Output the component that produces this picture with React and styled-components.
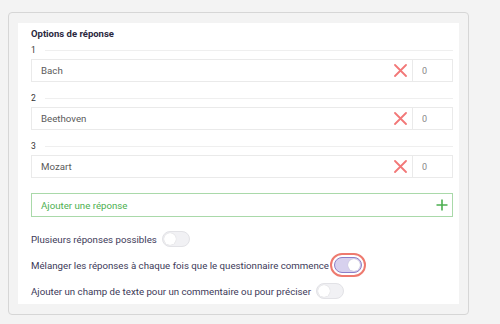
import React from "react";
import styled, { createGlobalStyle } from "styled-components";

const GlobalStyle = createGlobalStyle`
  body {
    margin: 0;
    background: #f3f3f3;
    font-family: Roboto, "Liberation Sans", sans-serif;
  }
`;

const Page = styled.div`
  padding: 12px 31px 10px 8px;
`;

const Panel = styled.div`
  border: 1px solid #d6d6d6;
  border-radius: 4px;
  padding: 10px 9px 10px 9px;
`;

const Card = styled.div`
  background: #fff;
  padding: 6px 6px 5px 13px;
`;

const Title = styled.div`
  font-size: 9.5px;
  line-height: 10px;
  font-weight: 700;
  color: #2b2840;
`;

const Option = styled.div`
  margin-top: ${(p) => (p.first ? "5px" : "10px")};
`;

const Label = styled.div`
  display: flex;
  align-items: center;
  gap: 9px;
  height: 12px;
  font-size: 8.5px;
  color: #333;
  margin-bottom: 3px;
  &::after {
    content: "";
    flex: 1;
    height: 1px;
    background: #efefef;
  }
`;

const InputRow = styled.div`
  display: flex;
  height: 23px;
  border: 1px solid #eaeaea;
  box-sizing: border-box;
`;

const TextCell = styled.div`
  flex: 1;
  display: flex;
  align-items: center;
  padding-left: 9px;
  font-size: 9.7px;
  color: #5a5a5a;
`;

const Remove = styled.div`
  display: flex;
  align-items: center;
  padding-right: 5px;
`;

const NumCell = styled.div`
  width: 30px;
  border-left: 1px solid #eaeaea;
  display: flex;
  align-items: center;
  padding-left: 9px;
  font-size: 9px;
  color: #888;
`;

const AddButton = styled.div`
  margin-top: 15px;
  height: 24px;
  box-sizing: border-box;
  border: 1px solid #a9d9a9;
  display: flex;
  align-items: center;
  justify-content: space-between;
  padding: 0 4px 0 9px;
  font-size: 9.7px;
  color: #4caf50;
`;

const Settings = styled.div`
  margin-top: 14px;
  display: flex;
  flex-direction: column;
  gap: 10px;
`;

const SettingRow = styled.div`
  display: flex;
  align-items: center;
  gap: 5px;
  height: 16px;
  font-size: 9.7px;
  color: #3c3958;
`;

const Toggle = styled.div`
  position: relative;
  width: 28px;
  height: 16px;
  box-sizing: border-box;
  border-radius: 8px;
  border: 1px solid ${(p) => (p.on ? "#8c80c8" : "#e2e2e6")};
  background: ${(p) => (p.on ? "#d7d1ee" : "#f1f1f4")};
  outline: ${(p) => (p.highlight ? "2px solid #ee7a6f" : "none")};
  outline-offset: 2px;
  &::after {
    content: "";
    position: absolute;
    top: 1px;
    left: ${(p) => (p.on ? "13px" : "1px")};
    width: 12px;
    height: 12px;
    border-radius: 50%;
    background: #fff;
    box-shadow: 0 0 1px rgba(0, 0, 0, 0.2);
  }
`;

const Cross = () => (
  <svg width="13" height="13" viewBox="0 0 13 13">
    <path d="M1 1 L12 12 M12 1 L1 12" stroke="#f27878" strokeWidth="1.8" strokeLinecap="round" />
  </svg>
);

const Plus = () => (
  <svg width="12" height="12" viewBox="0 0 12 12">
    <path d="M6 0.5 V11.5 M0.5 6 H11.5" stroke="#4caf50" strokeWidth="1.6" />
  </svg>
);

const options = ["Bach", "Beethoven", "Mozart"];

export default function App() {
  return (
    <>
      <GlobalStyle />
      <Page>
        <Panel>
          <Card>
            <Title>Options de réponse</Title>
            {options.map((name, i) => (
              <Option key={name} first={i === 0}>
                <Label>{i + 1}</Label>
                <InputRow>
                  <TextCell>{name}</TextCell>
                  <Remove>
                    <Cross />
                  </Remove>
                  <NumCell>0</NumCell>
                </InputRow>
              </Option>
            ))}
            <AddButton>
              Ajouter une réponse
              <Plus />
            </AddButton>
            <Settings>
              <SettingRow>
                Plusieurs réponses possibles
                <Toggle />
              </SettingRow>
              <SettingRow>
                Mélanger les réponses à chaque fois que le questionnaire commence
                <Toggle on highlight />
              </SettingRow>
              <SettingRow>
                Ajouter un champ de texte pour un commentaire ou pour préciser
                <Toggle />
              </SettingRow>
            </Settings>
          </Card>
        </Panel>
      </Page>
    </>
  );
}
